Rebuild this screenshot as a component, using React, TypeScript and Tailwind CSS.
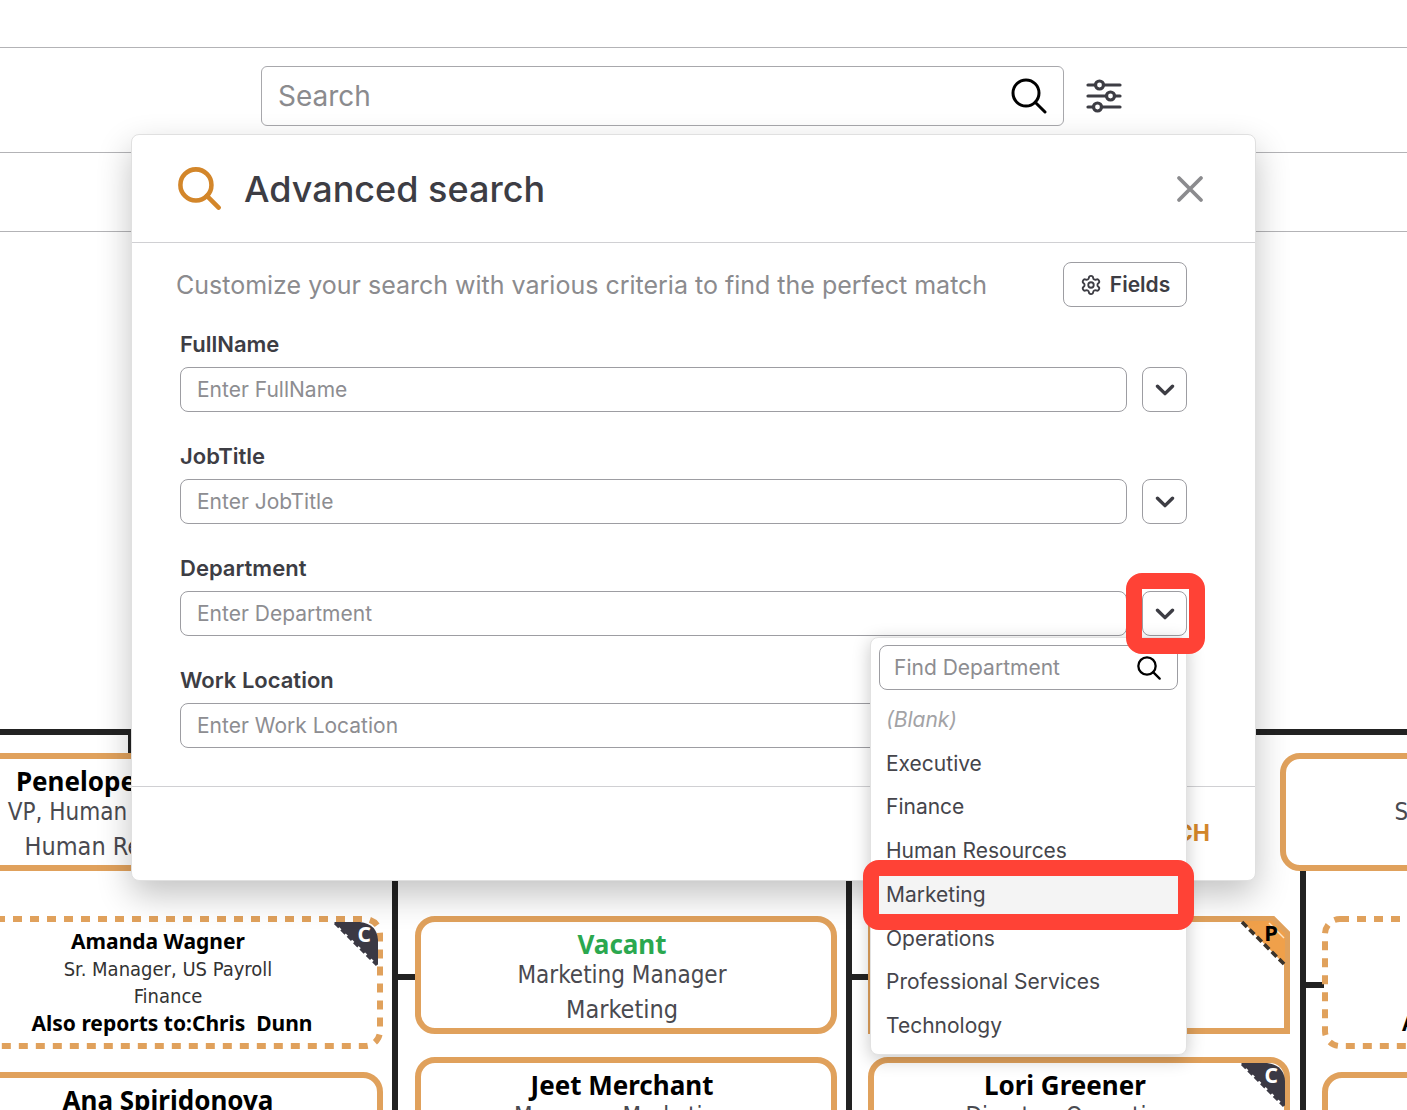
import type { ReactNode } from 'react';
import { Settings } from 'lucide-react';

type OrgNode = {
  name: string;
  lines: string[];
  x: number;
  y: number;
  kind?: 'solid' | 'dashed' | 'cut';
  badge?: 'C' | 'P';
  vacant?: boolean;
  alsoReportsTo?: string;
};

const NODES: OrgNode[] = [
  { name: 'Penelope Greene', lines: ['VP, Human Resources', 'Human Resources'], x: -81, y: 521 },
  { name: '', lines: ['SVP, Engineering', ''], x: 1280, y: 521 },
  {
    name: 'Amanda Wagner',
    lines: ['Sr. Manager, US Payroll', 'Finance'],
    x: -39,
    y: 684,
    kind: 'dashed',
    badge: 'C',
    alsoReportsTo: 'Chris  Dunn',
  },
  { name: 'Ana Spiridonova', lines: ['Manager, Benefits', 'Human Resources'], x: -39, y: 840 },
  { name: 'Vacant', lines: ['Marketing Manager', 'Marketing'], x: 415, y: 684, vacant: true },
  { name: 'Jeet Merchant', lines: ['Manager, Marketing', 'Marketing'], x: 415, y: 825 },
  { name: '', lines: [], x: 868, y: 684, kind: 'cut', badge: 'P' },
  { name: 'Lori Greener   ', lines: ['Director, Operations', 'Operations'], x: 868, y: 825, badge: 'C' },
  { name: '', lines: ['', ''], x: 1322, y: 684, kind: 'dashed', alsoReportsTo: 'Ian  Dunn' },
  { name: '', lines: [], x: 1322, y: 840 },
];

const FIELDS = ['FullName', 'JobTitle', 'Department', 'Work Location'];

const DEPARTMENTS = [
  'Executive',
  'Finance',
  'Human Resources',
  'Marketing',
  'Operations',
  'Professional Services',
  'Technology',
];

function SearchIcon({ className, stroke = 2.4 }: { className: string; stroke?: number }) {
  return (
    <svg viewBox="0 0 36 36" fill="none" stroke="currentColor" strokeWidth={stroke} strokeLinecap="round" className={className} aria-hidden="true">
      <circle cx="15" cy="15" r="13" />
      <path d="M24.2 24.2 34 34" />
    </svg>
  );
}

function SlidersIcon() {
  return (
    <svg viewBox="0 0 36 34" fill="none" stroke="currentColor" strokeWidth="3.2" strokeLinecap="round" className="h-[34px] w-9" aria-hidden="true">
      <path d="M2 6h7M18 6h16M2 17h18M29 17h5M2 28h5M16 28h18" />
      <circle cx="13.5" cy="6" r="4" />
      <circle cx="24.5" cy="17" r="4" />
      <circle cx="11.5" cy="28" r="4" />
    </svg>
  );
}

function Chevron() {
  return (
    <svg viewBox="0 0 20 12" fill="none" stroke="currentColor" strokeWidth="3.4" strokeLinecap="round" strokeLinejoin="round" className="h-3 w-5" aria-hidden="true">
      <path d="M2.5 2.2 10 9.6l7.5-7.4" />
    </svg>
  );
}

function Badge({ kind }: { kind: 'C' | 'P' }) {
  if (kind === 'P') {
    return (
      <div className="absolute right-0 top-0 size-[54px]">
        <svg viewBox="0 0 54 54" className="size-[54px]" aria-hidden="true">
          <path d="M6 5h30l13 13v31z" fill="#f0a04a" />
          <path d="M33 7l15 15" stroke="#fbe3c4" strokeWidth="1.5" />
          <path d="M6 6l43 43" stroke="#3a332b" strokeWidth="3.6" strokeDasharray="7 3.5" />
        </svg>
        <span className="absolute right-3 top-[2px] text-[22px] leading-7 font-bold text-black">P</span>
      </div>
    );
  }
  return (
    <div className="absolute right-0 top-0 size-[54px]">
      <svg viewBox="0 0 54 54" className="size-[54px]" aria-hidden="true">
        <path d="M5 6h26q17 2 18 18v25z" fill="#3b3944" />
        <path d="M6 7l42 42" stroke="#3b3944" strokeWidth="3" strokeDasharray="6 3" />
      </svg>
      <span className="absolute right-3 top-1 text-[21px] leading-7 font-bold text-white">C</span>
    </div>
  );
}

function OrgCard({ node }: { node: OrgNode }) {
  const { kind = 'solid' } = node;
  const dashed = kind === 'dashed';
  const frame = {
    solid: 'h-[118px] rounded-[20px] border-6 border-[#e0a15c] pt-[6px]',
    dashed: 'h-[133px] pt-[11px]',
    cut: 'h-[118px]',
  }[kind];

  return (
    <article
      className={`absolute w-[422px] text-center whitespace-pre ${frame}`}
      style={{ left: node.x, top: node.y }}
    >
      {dashed && (
        <svg className="absolute inset-0 size-full" viewBox="0 0 422 133" aria-hidden="true">
          <rect x="3" y="3" width="416" height="127" rx="15" fill="none" stroke="#e0a15c" strokeWidth="6" strokeDasharray="9 8" />
        </svg>
      )}
      {kind === 'cut' && (
        <svg className="absolute inset-0 size-full" viewBox="0 0 422 118" aria-hidden="true">
          <path d="M3 3h402l14 14v98H3z" fill="none" stroke="#e0a15c" strokeWidth="6" />
        </svg>
      )}
      {node.badge && (
        <div className={kind === 'solid' ? 'absolute -right-[6px] -top-[6px]' : 'absolute right-0 top-0'}>
          <Badge kind={node.badge} />
        </div>
      )}
      {dashed ? (
        <div className="relative text-[20px] text-[#333]">
          <h3 className="h-7 pr-7 text-[21px] leading-7 font-bold text-black">{node.name}</h3>
          <p className="h-7 pr-2 leading-7 font-['DejaVu_Sans_Condensed','Noto_Sans',sans-serif]">{node.lines[0]}</p>
          <p className="h-[26px] pr-2 leading-[26px] font-['DejaVu_Sans_Condensed','Noto_Sans',sans-serif]">{node.lines[1]}</p>
          <p className="text-[21px] leading-7 font-bold text-black">Also reports to:{node.alsoReportsTo}</p>
        </div>
      ) : (
        <div className="pr-2 text-[24px] text-[#4a4a50] font-['DejaVu_Sans_Condensed','Noto_Sans',sans-serif]">
          <h3 className={`h-8 text-[26px] leading-8 font-bold font-['Noto_Sans',sans-serif] ${node.vacant ? 'text-[#2ba84f]' : 'text-black'}`}>
            {node.name}
          </h3>
          <p className="h-[30px] leading-[30px]">{node.lines[0]}</p>
          <p className="text-[25px] leading-10">{node.lines[1]}</p>
        </div>
      )}
    </article>
  );
}

function OrgChart() {
  return (
    <main className="relative h-[878px] overflow-hidden bg-white font-['Noto_Sans',sans-serif]">
      {/* connectors */}
      <svg className="absolute inset-0 h-full w-full" aria-hidden="true">
        <g stroke="#222" strokeWidth="6" fill="none">
          <path d="M0 500H1600" />
          <path d="M131 500V521" />
          <path d="M395 520V900M395 745H415" />
          <path d="M849 520V900M849 745H868" />
          <path d="M1303 639V900M1303 753H1324" />
        </g>
      </svg>
      {NODES.map((node, i) => (
        <OrgCard key={i} node={node} />
      ))}
    </main>
  );
}

// Red marker drawn around the control being pointed at
function Highlight({ className }: { className: string }) {
  return <div className={`pointer-events-none absolute z-30 rounded-2xl border-16 border-[#ff4236] ${className}`} />;
}

function DepartmentMenu() {
  return (
    <div className="absolute right-0 top-full z-20 mt-px w-[317px] rounded-lg border border-[#e2e2e2] bg-white px-2 pt-[7px] pb-[6px] shadow-[0_4px_18px_rgba(0,0,0,0.22)]">
      <label className="flex h-[45px] items-center rounded-lg border border-[#9d9da2] pr-4 pl-[14px]">
        <span className="sr-only">Find Department</span>
        <input type="text" placeholder="Find Department" className="min-w-0 flex-1 text-[21px] leading-7 outline-none placeholder:text-[#8d8d91]" />
        <SearchIcon className="size-6 text-black" stroke={3.4} />
      </label>
      <ul className="mt-2 flex h-[350px] flex-col text-[21px] leading-7 text-[#45454b]">
        <li className="flex-1">
          <button type="button" className="flex h-full w-full items-center px-[7px] italic text-[#a3a3a6]">(Blank)</button>
        </li>
        {DEPARTMENTS.map((name) => (
          <li key={name} className="relative flex-1">
            <button
              type="button"
              className={`flex h-full w-full items-center px-[7px] text-left ${name === 'Marketing' ? 'bg-[#f4f4f4]' : ''}`}
            >
              {name}
            </button>
            {name === 'Marketing' && <Highlight className="-inset-x-4 -inset-y-[13px]" />}
          </li>
        ))}
      </ul>
    </div>
  );
}

function FieldRow({ name, children }: { name: string; children?: ReactNode }) {
  const id = name.replace(' ', '-').toLowerCase();
  return (
    <div className="relative">
      <label htmlFor={id} className="block text-[22px] leading-[30px] font-semibold text-[#3d3d44]">
        {name}
      </label>
      <div className="mt-2 flex gap-[15px]">
        <input
          id={id}
          type="text"
          placeholder={`Enter ${name}`}
          className="h-[45px] min-w-0 flex-1 rounded-lg border border-[#9d9da2] bg-white px-4 text-[21px] outline-none placeholder:text-[#8d8d91]"
        />
        <div className="relative">
          <button
            type="button"
            aria-label={`Choose ${name}`}
            className="flex size-[45px] items-center justify-center rounded-lg border border-[#9d9da2] bg-white text-[#3d3d44]"
          >
            <Chevron />
          </button>
          {name === 'Department' && <Highlight className="-top-[18px] -right-[18px] -bottom-[18px] -left-4" />}
        </div>
      </div>
      {children}
    </div>
  );
}

function AdvancedSearch() {
  return (
    <section
      role="dialog"
      aria-labelledby="advanced-title"
      className="w-full max-w-[1125px] rounded-lg border border-[#e0e0e0] bg-white shadow-[0_14px_34px_rgba(0,0,0,0.24)]"
    >
      <header className="flex h-[108px] items-center border-b border-[#d0d0d3] pr-[51px] pl-[46px]">
        <SearchIcon className="size-[43px] text-[#d3862a]" stroke={3.8} />
        <h2 id="advanced-title" className="ml-[23px] flex-1 text-[36px] leading-10 font-medium text-[#3d3d44]">
          Advanced search
        </h2>
        <button type="button" aria-label="Close" className="text-[#8b8b8e]">
          <svg viewBox="0 0 28 28" fill="none" stroke="currentColor" strokeWidth="3.8" strokeLinecap="round" className="size-7" aria-hidden="true">
            <path d="M3 3l22 22M25 3 3 25" />
          </svg>
        </button>
      </header>

      <div className="border-b border-[#d0d0d3] pt-[19px] pr-[68px] pb-[38px] pl-12">
        <div className="-ml-1 flex items-center justify-between">
          <p className="text-[25px] leading-8 text-[#8b8b8e]">
            Customize your search with various criteria to find the perfect match
          </p>
          <button type="button" className="flex h-[45px] w-[124px] items-center justify-center gap-2 rounded-lg border border-[#9d9da2] text-[21px] font-semibold text-[#3d3d44]">
            <Settings size={22} strokeWidth={2} />
            Fields
          </button>
        </div>
        <div className="mt-[22px] flex flex-col gap-[29px]">
          {FIELDS.map((name) => (
            <FieldRow key={name} name={name}>
              {name === 'Department' && <DepartmentMenu />}
            </FieldRow>
          ))}
        </div>
      </div>

      <footer className="flex h-[93px] items-center justify-end pr-[45px]">
        <button type="button" className="text-[23px] font-bold text-[#d3862a]">SEARCH</button>
      </footer>
    </section>
  );
}

export default function App() {
  return (
    <div className="relative overflow-hidden bg-white font-['Inter','Liberation_Sans',sans-serif]">
      <div className="h-12 border-b border-[#b3b3b6]" />
      <header className="flex h-[105px] items-start justify-center gap-[22px] border-b border-[#b3b3b6] pt-[18px] pr-10 pl-4">
        <label className="flex h-[60px] w-full max-w-[803px] items-center rounded-md border border-[#a8a8ac] px-4">
          <span className="sr-only">Search</span>
          <input type="search" placeholder="Search" className="h-12 min-w-0 flex-1 text-[28px] outline-none placeholder:text-[#8b8b8e]" />
          <SearchIcon className="size-9 text-black" stroke={3} />
        </label>
        <button type="button" aria-label="Advanced search" className="flex h-[60px] items-center text-[#3d3d44]">
          <SlidersIcon />
        </button>
      </header>
      <div className="h-[79px] border-b border-[#b3b3b6]" />
      <OrgChart />

      <div className="absolute inset-x-0 top-[134px] flex justify-center pr-5">
        <AdvancedSearch />
      </div>
    </div>
  );
}
